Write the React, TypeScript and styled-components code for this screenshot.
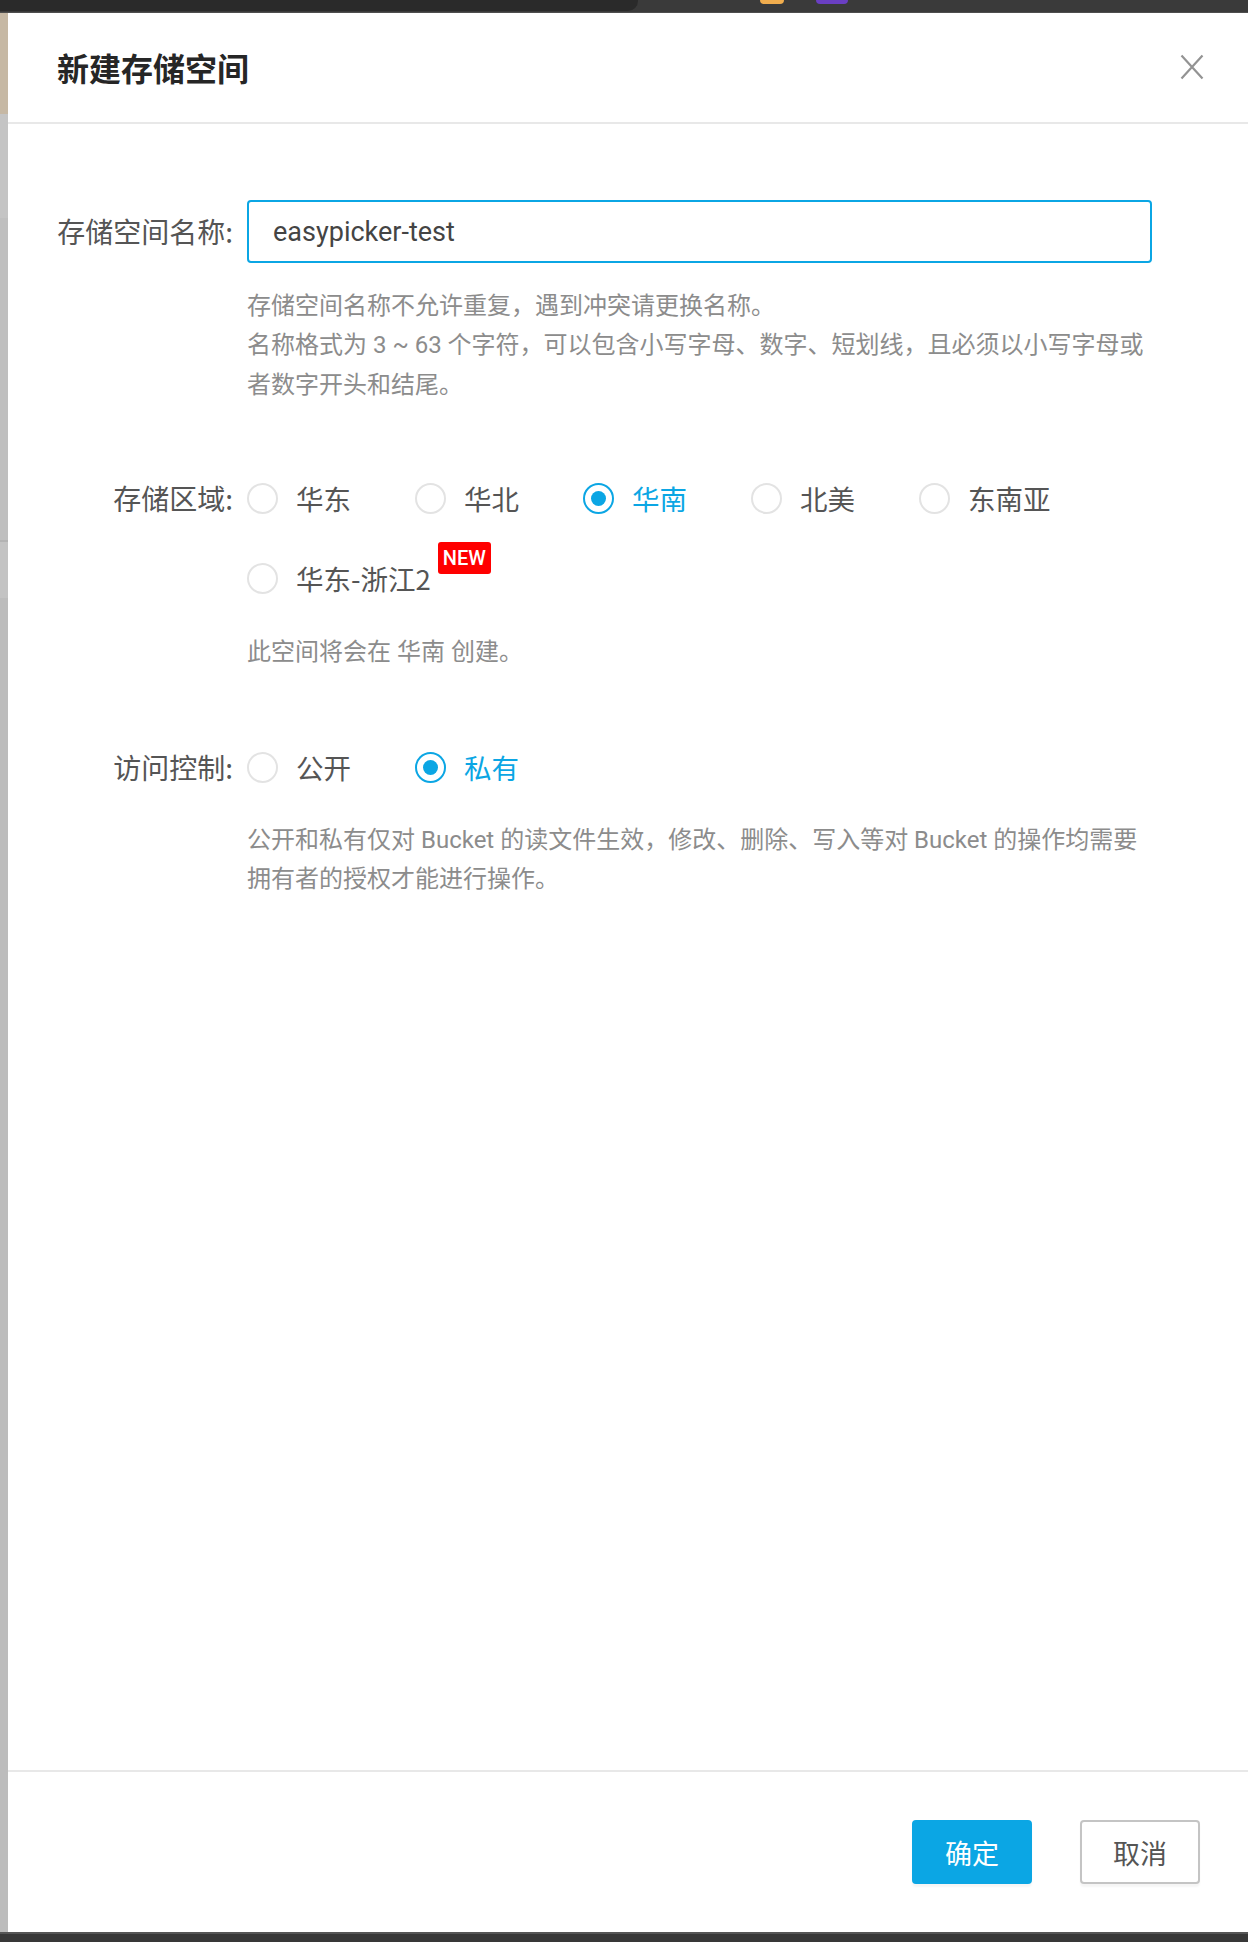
import React from "react";
import styled, { createGlobalStyle } from "styled-components";

const GlobalStyle = createGlobalStyle`
  html, body { margin: 0; padding: 0; background: #383838; }
  * { box-sizing: border-box; }
  body { font-family: Roboto, "Noto Sans CJK SC", sans-serif; }
`;

const BLUE = "#0ba6e4";

const Page = styled.div`
  width: 1248px;
  height: 1942px;
  display: flex;
  flex-direction: column;
  overflow: hidden;
  background: #383838;
`;

const TopBar = styled.div`
  height: 13px;
  flex: none;
  display: flex;
  align-items: flex-start;
  background: #3a3a3a;
  border-bottom: 1px solid #4e4e4e;
`;

const DarkTab = styled.div`
  width: 638px;
  height: 11px;
  background: #2a2a2a;
  border-bottom-right-radius: 10px;
`;

const ChromeChip = styled.div<{ $color: string; $w: number; $ml: number }>`
  width: ${(p) => p.$w}px;
  height: 4px;
  margin-left: ${(p) => p.$ml}px;
  background: ${(p) => p.$color};
  border-radius: 0 0 4px 4px;
`;

const Main = styled.div`
  flex: 1;
  display: flex;
  min-height: 0;
`;

const LeftStrip = styled.div`
  width: 8px;
  flex: none;
  display: flex;
  flex-direction: column;
  background: #bcbcbc;
`;

const StripSeg = styled.div<{ $h: number; $c: string }>`
  height: ${(p) => p.$h}px;
  flex: none;
  background: ${(p) => p.$c};
`;

const Modal = styled.div`
  flex: 1;
  display: flex;
  flex-direction: column;
  background: #fff;
`;

const Header = styled.div`
  height: 111px;
  flex: none;
  display: flex;
  align-items: center;
  justify-content: space-between;
  padding: 0 44px 2px 49px;
  border-bottom: 2px solid #e8e8e8;
`;

const Title = styled.h1`
  margin: 0;
  font-family: "Noto Sans CJK SC", sans-serif;
  font-size: 32px;
  font-weight: 700;
  color: #262626;
  line-height: 40px;
`;

const CloseButton = styled.button`
  width: 24px;
  height: 26px;
  padding: 0;
  border: none;
  background: transparent;
  display: flex;
  cursor: pointer;
`;

const Body = styled.div`
  flex: 1;
  display: flex;
  flex-direction: column;
  padding: 76px 0 0 49px;
`;

const FormItem = styled.div<{ $mt?: number }>`
  display: grid;
  grid-template-columns: 176px 905px;
  column-gap: 14px;
  margin-top: ${(p) => p.$mt ?? 0}px;
`;

const Label = styled.div<{ $h: number }>`
  font-family: "Noto Sans CJK SC", sans-serif;
  font-size: 28px;
  color: #555;
  line-height: ${(p) => p.$h}px;
  text-align: right;
  white-space: nowrap;
`;

const Control = styled.div`
  display: flex;
  flex-direction: column;
`;

const TextInput = styled.input`
  width: 905px;
  height: 63px;
  border: 2px solid ${BLUE};
  border-radius: 4px;
  padding: 0 0 0 24px;
  font-family: Roboto, "Noto Sans CJK SC", sans-serif;
  font-size: 27px;
  color: #444;
  outline: none;
  background: #fff;
`;

const Help = styled.div<{ $mt: number }>`
  width: 900px;
  margin-top: ${(p) => p.$mt}px;
  font-family: Roboto, "Noto Sans CJK SC", sans-serif;
  font-size: 24px;
  line-height: 39.5px;
  color: #8c8c8c;
`;

const HelpLine = styled.p`
  margin: 0;
`;

const RadioGroup = styled.div`
  display: flex;
  flex-wrap: wrap;
  row-gap: 32px;
`;

const RadioOption = styled.label<{ $checked: boolean }>`
  display: flex;
  align-items: center;
  height: 48px;
  margin-right: 64px;
  font-family: "Noto Sans CJK SC", sans-serif;
  font-size: 27.5px;
  color: ${(p) => (p.$checked ? BLUE : "#555")};
  cursor: pointer;
  white-space: nowrap;
`;

const RadioCircle = styled.span<{ $checked: boolean }>`
  width: 31px;
  height: 31px;
  flex: none;
  border-radius: 50%;
  border: 2px solid ${(p) => (p.$checked ? BLUE : "#e3e3e3")};
  display: flex;
  align-items: center;
  justify-content: center;
  margin-right: 18px;
  &::after {
    content: "";
    width: 15px;
    height: 15px;
    border-radius: 50%;
    background: ${BLUE};
    display: ${(p) => (p.$checked ? "block" : "none")};
  }
`;

const NewBadge = styled.span`
  position: relative;
  top: -20px;
  margin-left: 7px;
  height: 32px;
  padding: 0 5px;
  border-radius: 3px;
  background: #ff0000;
  color: #fff;
  font-family: Roboto, sans-serif;
  font-size: 20px;
  font-weight: 500;
  line-height: 32px;
`;

const Footer = styled.div`
  height: 162px;
  flex: none;
  border-top: 2px solid #e8e8e8;
  display: flex;
  justify-content: flex-end;
  align-items: flex-start;
  gap: 48px;
  padding: 48px 48px 0 0;
`;

const Button = styled.button<{ $primary?: boolean }>`
  width: 120px;
  height: 64px;
  border-radius: 4px;
  font-family: "Noto Sans CJK SC", sans-serif;
  font-size: 27px;
  cursor: pointer;
  border: 2px solid ${(p) => (p.$primary ? BLUE : "#c4c4c4")};
  background: ${(p) => (p.$primary ? BLUE : "#fff")};
  color: ${(p) => (p.$primary ? "#fff" : "#555")};
  box-shadow: 0 3px 2px rgba(0, 0, 0, 0.04);
`;

const BottomBar = styled.div`
  height: 10px;
  flex: none;
  background: #383838;
  border-top: 2px solid #565656;
`;

const regions = ["华东", "华北", "华南", "北美", "东南亚"];

function Radio({ label, checked, badge }: { label: string; checked?: boolean; badge?: boolean }) {
  return (
    <RadioOption $checked={!!checked}>
      <RadioCircle $checked={!!checked} />
      {label}
      {badge && <NewBadge>NEW</NewBadge>}
    </RadioOption>
  );
}

export default function App() {
  return (
    <>
      <GlobalStyle />
      <Page>
        <TopBar>
          <DarkTab />
          <ChromeChip $color="#f0ad4e" $w={24} $ml={122} />
          <ChromeChip $color="#6a3fc2" $w={32} $ml={32} />
        </TopBar>
        <Main>
          <LeftStrip>
            <StripSeg $h={101} $c="#c6b8a4" />
            <StripSeg $h={104} $c="#c4c4c4" />
            <StripSeg $h={322} $c="#bfbfbf" />
            <StripSeg $h={2} $c="#b3b3b3" />
            <StripSeg $h={56} $c="#c3c3c3" />
          </LeftStrip>
          <Modal>
            <Header>
              <Title>新建存储空间</Title>
              <CloseButton aria-label="close">
                <svg width="24" height="26" viewBox="0 0 24 26">
                  <path d="M1.5 1.5 L22.5 24.5 M22.5 1.5 L1.5 24.5" stroke="#939393" strokeWidth="2.2" fill="none" />
                </svg>
              </CloseButton>
            </Header>
            <Body>
              <FormItem>
                <Label $h={63}>存储空间名称:</Label>
                <Control>
                  <TextInput readOnly value="easypicker-test" />
                  <Help $mt={23.5}>
                    <HelpLine>存储空间名称不允许重复，遇到冲突请更换名称。</HelpLine>
                    <HelpLine>
                      名称格式为 3 ~ 63 个字符，可以包含小写字母、数字、短划线，且必须以小写字母或者数字开头和结尾。
                    </HelpLine>
                  </Help>
                </Control>
              </FormItem>
              <FormItem $mt={69}>
                <Label $h={48}>存储区域:</Label>
                <Control>
                  <RadioGroup>
                    {regions.map((r) => (
                      <Radio key={r} label={r} checked={r === "华南"} />
                    ))}
                    <Radio label="华东-浙江2" badge />
                  </RadioGroup>
                  <Help $mt={30.5}>
                    <HelpLine>此空间将会在 华南 创建。</HelpLine>
                  </Help>
                </Control>
              </FormItem>
              <FormItem $mt={71}>
                <Label $h={48}>访问控制:</Label>
                <Control>
                  <RadioGroup>
                    <Radio label="公开" />
                    <Radio label="私有" checked />
                  </RadioGroup>
                  <Help $mt={29.5}>
                    <HelpLine>
                      公开和私有仅对 Bucket 的读文件生效，修改、删除、写入等对 Bucket 的操作均需要拥有者的授权才能进行操作。
                    </HelpLine>
                  </Help>
                </Control>
              </FormItem>
            </Body>
            <Footer>
              <Button $primary>确定</Button>
              <Button>取消</Button>
            </Footer>
          </Modal>
        </Main>
        <BottomBar />
      </Page>
    </>
  );
}
